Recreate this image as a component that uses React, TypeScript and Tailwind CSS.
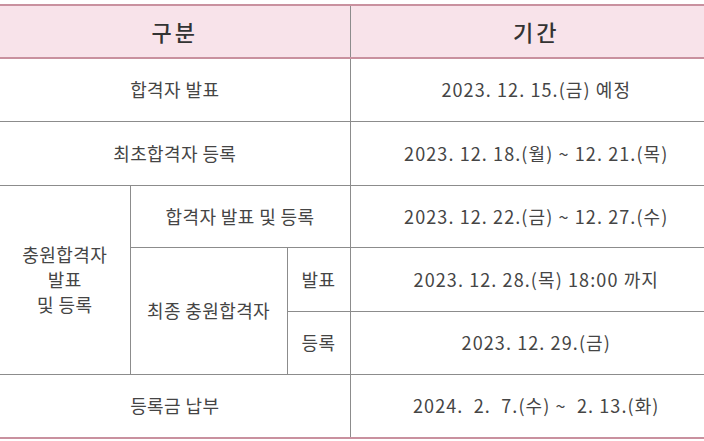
export default function App() {
  const cell = "border border-[#8c8c8c] text-center align-middle text-[18px] text-[#454545] whitespace-pre tracking-[0.4px]";
  const date = "border border-[#8c8c8c] text-center align-middle text-[18px] text-[#454545] whitespace-pre tracking-[1.1px] pl-[18px]";
  const first = "border-l-0";
  const last = "border-r-0";
  return (
    <div className="w-[704px] h-[441px] bg-white pt-[4px] font-['Noto_Sans_CJK_KR','Noto_Sans',sans-serif]">
      <table className="w-[704px] border-collapse table-fixed border-b-[2px] border-b-[#c9919f]">
        <colgroup>
          <col className="w-[130px]" />
          <col className="w-[157px]" />
          <col className="w-[63px]" />
          <col className="w-[354px]" />
        </colgroup>
        <thead>
          <tr className="h-[53px] bg-[#f8e3ea]">
            <th colSpan={3} className="border-y-[2px] border-y-[#c9919f] border-r border-r-[#8c8c8c] text-[22px] font-medium text-[#333] tracking-[3px]">구분</th>
            <th className="border-y-[2px] border-y-[#c9919f] text-[22px] font-medium text-[#333] tracking-[3px] pl-[18px]">기간</th>
          </tr>
        </thead>
        <tbody>
          <tr className="h-[63px]">
            <td colSpan={3} className={`${cell} ${first} border-t-0`}>합격자 발표</td>
            <td className={`${date} ${last} border-t-0`}>2023. 12. 15.(금) 예정</td>
          </tr>
          <tr className="h-[64px]">
            <td colSpan={3} className={`${cell} ${first}`}>최초합격자 등록</td>
            <td className={`${date} ${last}`}>2023. 12. 18.(월) ~ 12. 21.(목)</td>
          </tr>
          <tr className="h-[62px]">
            <td rowSpan={3} className={`${cell} ${first} leading-[25px]`}>{"충원합격자\n발표\n및 등록"}</td>
            <td colSpan={2} className={cell}>합격자 발표 및 등록</td>
            <td className={`${date} ${last}`}>2023. 12. 22.(금) ~ 12. 27.(수)</td>
          </tr>
          <tr className="h-[64px]">
            <td rowSpan={2} className={cell}>최종 충원합격자</td>
            <td className={cell}>발표</td>
            <td className={`${date} ${last}`}>2023. 12. 28.(목) 18:00 까지</td>
          </tr>
          <tr className="h-[63px]">
            <td className={cell}>등록</td>
            <td className={`${date} ${last}`}>2023. 12. 29.(금)</td>
          </tr>
          <tr className="h-[64px]">
            <td colSpan={3} className={`${cell} ${first} border-b-0`}>등록금 납부</td>
            <td className={`${date} ${last} border-b-0`}>2024.  2.  7.(수) ~  2. 13.(화)</td>
          </tr>
        </tbody>
      </table>
    </div>
  );
}
